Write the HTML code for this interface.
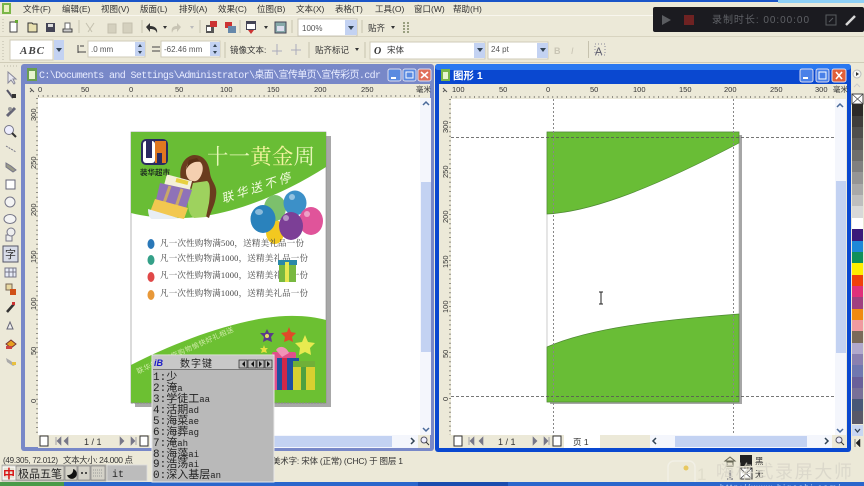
<!DOCTYPE html>
<html><head><meta charset="utf-8"><style>
html,body{margin:0;padding:0;background:#ece9d8;overflow:hidden}
svg{display:block;filter:blur(.35px)}
text{font-family:"Liberation Sans","Noto Sans CJK SC",sans-serif;fill:#333}
.m text{font-size:8.5px;fill:#333}
.r text{font-size:7.5px;fill:#333}
.i text{font-family:"Liberation Mono","Noto Sans CJK SC",monospace;font-size:11px;fill:#222}
.i tspan{font-size:9px}
.p text{font-family:"Liberation Serif","Noto Serif CJK SC",serif;font-size:8.5px;fill:#444}
</style></head><body>
<svg width="864" height="486" viewBox="0 0 864 486" xmlns="http://www.w3.org/2000/svg">
<rect width="864" height="486" fill="#ece9d8"/>
<rect width="864" height="2" fill="#1a55c8"/>
<rect x="778" y="0" width="86" height="3" fill="#8fd0f5"/>
<line x1="0" y1="15.5" x2="864" y2="15.5" stroke="#f8f6ee"/>
<line x1="0" y1="36.5" x2="864" y2="36.5" stroke="#d8d4c0"/>
<line x1="0" y1="62.5" x2="864" y2="62.5" stroke="#d0ccb8"/>
<!-- menu -->
<rect x="2" y="3" width="9" height="11" fill="#7ab648"/><rect x="4" y="5" width="5" height="7" fill="#e8f0c0"/>
<g class="m">
<text x="23" y="12">文件(F)</text><text x="62" y="12">编辑(E)</text><text x="101" y="12">视图(V)</text><text x="140" y="12">版面(L)</text><text x="179" y="12">排列(A)</text><text x="218" y="12">效果(C)</text><text x="257" y="12">位图(B)</text><text x="296" y="12">文本(X)</text><text x="335" y="12">表格(T)</text><text x="375" y="12">工具(O)</text><text x="414" y="12">窗口(W)</text><text x="453" y="12">帮助(H)</text>
</g>
<!-- toolbar 1 -->
<g stroke="#bdb9a8" stroke-dasharray="1 2"><line x1="3" y1="19" x2="3" y2="34"/><line x1="3" y1="41" x2="3" y2="60"/></g>
<rect x="10" y="22" width="7" height="10" fill="#fff" stroke="#444"/><rect x="15" y="20" width="3" height="3" fill="#6a3"/>
<path d="M28 32V23h4l1 1h4v8z" fill="#e8e0b0" stroke="#333"/>
<rect x="46" y="23" width="9" height="9" fill="#445"/><rect x="48" y="24" width="5" height="3" fill="#ddd"/>
<path d="M63 29h9v3h-9z" fill="#ccc" stroke="#444"/><rect x="65" y="23" width="5" height="6" fill="#fff" stroke="#666"/>
<g fill="#d4d0be" stroke="#c4c0ae"><path d="M86 23l6 9M94 23l-6 9" fill="none"/><rect x="108" y="24" width="8" height="9"/><rect x="123" y="23" width="9" height="10"/></g>
<path d="M146 27l4-4v3c5 0 8 3 7 7-1-3-3-4-7-4v3z" fill="#333"/>
<path d="M163 26h4l-2 3z" fill="#333"/>
<path d="M181 27l-4-4v3c-5 0-6 3-5 7 1-3 2-4 5-4v3z" fill="#c8c4b4"/>
<path d="M190 26h4l-2 3z" fill="#bbb"/>
<rect x="206" y="25" width="8" height="8" fill="#555"/><rect x="210" y="21" width="7" height="6" fill="#c33"/><rect x="207" y="27" width="4" height="4" fill="#fff"/>
<rect x="225" y="22" width="7" height="6" fill="#c33"/><rect x="228" y="26" width="8" height="7" fill="#68a"/>
<rect x="246" y="21" width="10" height="9" fill="#445"/><rect x="247" y="24" width="8" height="5" fill="#fff"/><path d="M248 30h6l-3 4z" fill="#c33"/>
<path d="M264 26h4l-2 3z" fill="#333"/>
<rect x="275" y="22" width="11" height="11" fill="#8aa" stroke="#445"/><rect x="277" y="26" width="7" height="5" fill="#dde"/>
<rect x="298" y="19" width="59" height="17" fill="#fff" stroke="#c8c4b4"/><rect x="345" y="20" width="12" height="15" fill="#c3d2f2"/><path d="M348 26l3 4 3-4z" fill="#345"/>
<text x="302" y="31" font-size="8" style="fill:#555">100%</text>
<text x="368" y="31" font-size="8.5">贴齐</text><path d="M391 26h4l-2 3z" fill="#333"/><path d="M404 22v11M408 22v11" stroke="#9aa080" stroke-width="2" stroke-dasharray="2 1"/>
<g stroke="#c6c2ae"><line x1="79" y1="20" x2="79" y2="33"/><line x1="142" y1="20" x2="142" y2="33"/><line x1="200" y1="20" x2="200" y2="33"/><line x1="240" y1="20" x2="240" y2="33"/><line x1="292" y1="20" x2="292" y2="33"/><line x1="362" y1="20" x2="362" y2="33"/></g>
<!-- toolbar 2 -->
<rect x="10" y="40" width="43" height="20" fill="#fff" stroke="#cfcbb8"/>
<text x="20" y="54" font-size="11" font-weight="bold" font-style="italic" style="font-family:'Liberation Serif',serif;fill:#444" textLength="24">ABC</text>
<rect x="54" y="40" width="10" height="20" fill="#c3d2f2"/><path d="M56 48l3 4 3-4z" fill="#345"/>
<path d="M78 45v8M78 52h8M80 46h4" stroke="#444" fill="none"/>
<rect x="88" y="41" width="57" height="16" fill="#fff" stroke="#cfcbb8"/><rect x="135" y="42" width="10" height="14" fill="#c3d2f2"/><path d="M138 47l2-3 2 3zM138 51l2 3 2-3z" fill="#345"/>
<text x="91" y="52" font-size="8" style="fill:#555">.0 mm</text>
<path d="M152 47h8M152 51h8" stroke="#444"/>
<rect x="161" y="41" width="59" height="16" fill="#fff" stroke="#cfcbb8"/><rect x="210" y="42" width="10" height="14" fill="#c3d2f2"/><path d="M213 47l2-3 2 3zM213 51l2 3 2-3z" fill="#345"/>
<text x="164" y="52" font-size="8" style="fill:#555">-62.46 mm</text>
<text x="230" y="53" font-size="8.5">镜像文本:</text>
<path d="M277 44v11M272 51h10M291 50h10M296 44v11" stroke="#aab" fill="none"/>
<text x="315" y="53" font-size="8.5">贴齐标记</text><path d="M355 48h4l-2 3z" fill="#333"/>
<rect x="370" y="42" width="115" height="17" fill="#fff" stroke="#cfcbb8"/><rect x="474" y="43" width="11" height="15" fill="#c3d2f2"/><path d="M477 48l3 4 3-4z" fill="#345"/>
<text x="374" y="54" font-size="10" font-style="italic" font-weight="bold" style="font-family:'Liberation Serif',serif">O</text><text x="387" y="53" font-size="8.5">宋体</text>
<rect x="488" y="42" width="60" height="17" fill="#fff" stroke="#cfcbb8"/><rect x="537" y="43" width="11" height="15" fill="#c3d2f2"/><path d="M540 48l3 4 3-4z" fill="#345"/>
<text x="491" y="52" font-size="8" style="fill:#555">24 pt</text>
<text x="554" y="54" font-size="9" font-weight="bold" style="fill:#c8c4b4">B</text><text x="571" y="54" font-size="9" font-style="italic" style="fill:#c8c4b4">I</text>
<line x1="588.5" y1="41" x2="588.5" y2="58" stroke="#c6c2ae"/>
<text x="595" y="55" font-size="11" style="fill:#556">A</text><rect x="595" y="44" width="10" height="11" fill="none" stroke="#889" stroke-dasharray="1 2"/>
<g stroke="#c6c2ae"><line x1="225" y1="42" x2="225" y2="58"/><line x1="309" y1="42" x2="309" y2="58"/><line x1="365" y1="42" x2="365" y2="58"/></g>
<!-- left tools -->
<g stroke="#bdb9a8" stroke-dasharray="1 2"><line x1="4" y1="66" x2="17" y2="66"/></g>
<path d="M8 72l0 11 3-3 3 4 1-1-2-4h3z" fill="#e8e8f0" stroke="#889"/>
<path d="M7 90l6 8" stroke="#556" stroke-width="2"/><rect x="12" y="94" width="4" height="4" fill="#333"/>
<path d="M7 116l8-8" stroke="#667" stroke-width="3"/><circle cx="10" cy="109" r="2" fill="#999"/>
<circle cx="9" cy="130" r="4.5" fill="#eef" stroke="#778"/><path d="M12 133l4 4" stroke="#333" stroke-width="2"/>
<path d="M6 146l10 6" stroke="#778" stroke-dasharray="2 1"/>
<path d="M6 163l5 3 5 4-3 2-7-5z" fill="#9a9a88" stroke="#778"/>
<rect x="6" y="180" width="9" height="9" fill="#fff" stroke="#667"/>
<circle cx="10" cy="202" r="5" fill="#f4f4f4" stroke="#778"/>
<ellipse cx="10" cy="219" rx="6" ry="4.5" fill="#f4f4f4" stroke="#778"/>
<rect x="6" y="235" width="6" height="6" fill="#eee" stroke="#778"/><circle cx="11" cy="232" r="4" fill="#eee" stroke="#778"/>
<rect x="3" y="246" width="15" height="16" fill="#d8dce8" stroke="#556"/><text x="5" y="258" font-size="11">字</text>
<rect x="5" y="268" width="11" height="9" fill="#e8ecf8" stroke="#778"/><path d="M9 268v9M13 268v9M5 272h11" stroke="#778" fill="none"/>
<rect x="6" y="284" width="6" height="6" fill="#e8d8a0" stroke="#765"/><rect x="10" y="289" width="6" height="6" fill="#d05018"/>
<path d="M7 312l7-8" stroke="#333" stroke-width="2.5"/><rect x="12" y="302" width="3" height="3" fill="#c33"/>
<path d="M7 329l3-7 3 7z" fill="#eee" stroke="#667"/>
<path d="M6 344l5-4 5 4-5 4z" fill="#e8a020" stroke="#733"/><rect x="6" y="346" width="6" height="3" fill="#c44"/>
<path d="M6 358l5 3 4 4-2 1-6-4z" fill="#aaa"/><rect x="12" y="362" width="4" height="3" fill="#e8c040"/>
<!-- left window -->
<rect x="21" y="64" width="413" height="387" rx="3" fill="#7888c8"/>
<rect x="25" y="84" width="405" height="363" fill="#ece9d8"/>
<rect x="38" y="98" width="382" height="337" fill="#fff"/>
<rect x="27" y="68" width="10" height="13" fill="#6a9f50"/><rect x="29" y="71" width="6" height="8" fill="#e8f4d0"/>
<text x="39" y="78" font-size="10" style="font-family:'Liberation Mono','Noto Sans CJK SC',monospace;fill:#e8ecff" textLength="342">C:\Documents and Settings\Administrator\桌面\宣传单页\宣传彩页.cdr</text>
<rect x="388" y="69" width="13" height="12" rx="2" fill="#5a8ae0" stroke="#dde"/><rect x="391" y="77" width="5" height="2" fill="#fff"/>
<rect x="403" y="69" width="13" height="12" rx="2" fill="#5a8ae0" stroke="#dde"/><rect x="406" y="72" width="7" height="6" fill="none" stroke="#fff"/>
<rect x="418" y="69" width="13" height="12" rx="2" fill="#e0705a" stroke="#dde"/><path d="M421 72l7 6M428 72l-7 6" stroke="#fff" stroke-width="1.6"/>
<g class="r"><text x="38" y="92">0</text><text x="81" y="92">50</text><text x="129" y="92">0</text><text x="175" y="92">50</text><text x="220" y="92">100</text><text x="267" y="92">150</text><text x="314" y="92">200</text><text x="361" y="92">250</text><text x="416" y="92" font-size="6">毫米</text>
<text transform="translate(36 121) rotate(-90)">300</text><text transform="translate(36 169) rotate(-90)">250</text><text transform="translate(36 216) rotate(-90)">200</text><text transform="translate(36 263) rotate(-90)">150</text><text transform="translate(36 310) rotate(-90)">100</text><text transform="translate(36 355) rotate(-90)">50</text><text transform="translate(36 403) rotate(-90)">0</text></g>
<line x1="38" y1="96" x2="420" y2="96" stroke="#333" stroke-dasharray="1 3.7"/>
<line x1="37" y1="98" x2="37" y2="435" stroke="#333" stroke-dasharray="1 3.7"/>
<path d="M30 88l4 4M30 92l2-2" stroke="#555"/>
<!-- left scrollbars -->
<rect x="420" y="98" width="11" height="337" fill="#f4f6fc"/>
<rect x="421" y="182" width="10" height="170" fill="#c3d2f2"/>
<path d="M423 105l3-3 3 3M423 428l3 3 3-3" fill="none" stroke="#4a6a9a" stroke-width="1.5"/>
<rect x="38" y="435" width="392" height="13" fill="#ece9d8"/>
<rect x="150" y="435" width="268" height="13" fill="#f4f6fc"/>
<rect x="270" y="436" width="122" height="11" fill="#c3d2f2"/>
<path d="M411 438l3 3-3 3" fill="none" stroke="#345" stroke-width="1.5"/>
<circle cx="424" cy="440" r="3" fill="#eef" stroke="#556"/><path d="M426 442l3 3" stroke="#333"/>
<rect x="40" y="436" width="8" height="10" fill="#fff" stroke="#333"/>
<path d="M56 437v8M61 437l-4 4 4 4zM68 437l-4 4 4 4z" fill="#778" stroke="#778" stroke-width=".6"/>
<text x="84" y="445" font-size="9">1 / 1</text>
<path d="M120 437l4 4-4 4zM131 437l4 4-4 4zM136 437v8" fill="#778" stroke="#778" stroke-width=".6"/>
<rect x="140" y="436" width="8" height="10" fill="#fff" stroke="#333"/>
<!-- poster -->
<rect x="135" y="136" width="196" height="271" fill="#a8a8a8"/>
<rect x="131" y="132" width="195" height="271" fill="#fff" stroke="#888" stroke-width=".6"/>
<path d="M131 132H326V167C290 190 245 210 205 216C180 220 150 218 131 213Z" fill="#69bd35"/>
<path d="M131 365C170 345 220 325 265 318C290 314 312 316 326 320V403H131Z" fill="#6cc032"/>
<line x1="131" y1="403" x2="326" y2="403" stroke="#888" stroke-dasharray="2 1"/>
<!-- logo -->
<rect x="141" y="139" width="27" height="26" rx="5" fill="#2a2a60"/>
<rect x="143" y="141" width="12" height="22" rx="3" fill="#fff"/>
<rect x="146" y="141" width="6" height="17" fill="#2a2a60"/>
<path d="M155 141h11v22h-4v-10h-5v10h-2z" fill="#e07820"/>
<text x="140" y="175" font-size="7.5" font-weight="bold" style="fill:#1c2a20" textLength="30">装华超市</text>
<text x="207" y="164" font-size="21.5" style="font-family:'Liberation Serif','Noto Serif CJK SC',serif;fill:#e6f6b8" textLength="108">十一<tspan style="fill:#f4f4a0">黄金</tspan>周</text>
<text transform="translate(223 203) rotate(-18)" font-size="12" font-style="italic" style="fill:#f4fbe0" textLength="72">联华送不停</text>
<!-- woman -->
<path d="M181 180c-3-14 4-24 13-25 10 0 15 8 16 18 1 9 8 12 6 23-1 9-5 15-7 22l-6-3 1-15z" fill="#6a3c1e"/>
<path d="M186 172c0-8 4-13 10-12 6 1 8 7 6 13-2 6-5 9-9 8-4 0-7-4-7-9z" fill="#f4cfb0"/>
<path d="M186 170c3-6 8-9 14-8l-3-4-8 2z" fill="#5a3015"/>
<path d="M193 183l14-2c4 2 3 14 2 22l-3 14-12 1c-5-3-6-10-6-16z" fill="#9ed25e"/>
<rect x="165" y="177" width="26" height="12" fill="#f4f0d8" transform="rotate(15 176 183)"/>
<path d="M160 183l32 7-6 18-30-8z" fill="#8f72b8"/>
<path d="M170 186l-6 17M182 189l-6 18" stroke="#c9a868" stroke-width="3"/>
<path d="M155 199l33 9-4 11-34-7z" fill="#f2c850"/>
<path d="M148 209l30 9-4 1h-22c-2 0-4-4-4-10z" fill="#e8eef4"/>
<path d="M176 180l12 3" stroke="#e8d040" stroke-width="4"/>
<!-- balloons -->
<ellipse cx="275" cy="232" rx="9" ry="12" fill="#f2c820"/>
<ellipse cx="275" cy="208" rx="11" ry="13" fill="#7cc06c"/>
<ellipse cx="295" cy="203" rx="11.5" ry="12.5" fill="#3c90c8"/>
<ellipse cx="311" cy="221" rx="12" ry="14" fill="#e0549a"/>
<ellipse cx="263" cy="219" rx="12.5" ry="14" fill="#2a82bc"/>
<ellipse cx="291" cy="226" rx="12" ry="14" fill="#7c3f96"/>
<g fill="#fff" opacity=".45"><ellipse cx="259" cy="212" rx="4" ry="3"/><ellipse cx="286" cy="218" rx="3" ry="3"/><ellipse cx="292" cy="197" rx="3" ry="3"/><ellipse cx="307" cy="214" rx="3" ry="3"/></g>
<!-- list -->
<g class="p">
<text x="160" y="246" textLength="144">凡一次性购物满500，送精美礼品一份</text>
<text x="160" y="261" textLength="148">凡一次性购物满1000，送精美礼品一份</text>
<text x="160" y="278" textLength="148">凡一次性购物满1000，送精美礼品一份</text>
<text x="160" y="296" textLength="148">凡一次性购物满1000，送精美礼品一份</text>
</g>
<ellipse cx="151" cy="244" rx="3.5" ry="5" fill="#2a78b8"/>
<ellipse cx="151" cy="260" rx="3.5" ry="5" fill="#34a088"/>
<ellipse cx="151" cy="277" rx="3.5" ry="5" fill="#e04848"/>
<ellipse cx="151" cy="295" rx="3.5" ry="5" fill="#e89838"/>
<rect x="279" y="263" width="17" height="19" fill="#78b840"/><rect x="278" y="260" width="19" height="5" fill="#2a88a8"/><rect x="285" y="262" width="4" height="20" fill="#e8e850"/>
<!-- bottom deco -->
<text transform="translate(138 374) rotate(-24)" font-size="7" style="fill:#cfeaa8" textLength="105">联华超市祝您购物愉快好礼相送</text>
<path d="M267 329l2 4 5 0-3 4 1 5-5-2-4 2 1-5-4-4 5 0z" fill="#5a3a8a"/><circle cx="267" cy="336" r="2" fill="#e8e060"/>
<path d="M289 327l2 5 5 1-4 4 1 5-4-2-5 2 1-5-4-4 6-1z" fill="#e04a28"/>
<path d="M305 335l3 7 7 1-5 5 1 7-6-3-6 3 1-7-5-5 7-1z" fill="#e8ea50"/>
<path d="M264 345l1 3 3 0-2 2 1 3-3-1-3 1 1-3-2-2 3 0z" fill="#e8e040"/>
<rect x="272" y="352" width="24" height="38" rx="2" fill="#e0508c"/>
<rect x="277" y="358" width="22" height="32" fill="#1f4fa0"/>
<rect x="282" y="358" width="5" height="32" fill="#d02848"/>
<path d="M276 350c3-5 10-4 13 3l-7 4z" fill="#f094b8"/>
<rect x="293" y="365" width="22" height="25" fill="#d8d030"/><rect x="301" y="365" width="5" height="25" fill="#50a040"/><rect x="293" y="361" width="22" height="6" fill="#70b038"/>
<!-- right window -->
<rect x="435" y="64" width="416" height="388" rx="3" fill="#0a48d0"/>
<rect x="435" y="64" width="416" height="6" rx="3" fill="#2a78f0"/>
<rect x="439" y="84" width="408" height="364" fill="#ece9d8"/>
<rect x="451" y="99" width="384" height="336" fill="#fff"/>
<rect x="441" y="69" width="9" height="12" fill="#7ab648"/><rect x="443" y="72" width="5" height="7" fill="#e8f4d0"/>
<text x="453" y="79" font-size="10.5" font-weight="bold" style="fill:#fff">图形 1</text>
<rect x="800" y="69" width="13" height="13" rx="2" fill="#4a80e8" stroke="#dde"/><rect x="803" y="77" width="5" height="2" fill="#fff"/>
<rect x="816" y="69" width="13" height="13" rx="2" fill="#4a80e8" stroke="#dde"/><rect x="819" y="72" width="7" height="7" fill="none" stroke="#fff"/>
<rect x="832" y="69" width="14" height="13" rx="2" fill="#e0603a" stroke="#dde"/><path d="M836 72l6 7M842 72l-6 7" stroke="#fff" stroke-width="1.6"/>
<g class="r"><text x="452" y="92">100</text><text x="499" y="92">50</text><text x="546" y="92">0</text><text x="590" y="92">50</text><text x="633" y="92">100</text><text x="679" y="92">150</text><text x="724" y="92">200</text><text x="770" y="92">250</text><text x="815" y="92">300</text><text x="833" y="92" font-size="6">毫米</text>
<text transform="translate(448 133) rotate(-90)">300</text><text transform="translate(448 178) rotate(-90)">250</text><text transform="translate(448 223) rotate(-90)">200</text><text transform="translate(448 268) rotate(-90)">150</text><text transform="translate(448 313) rotate(-90)">100</text><text transform="translate(448 358) rotate(-90)">50</text><text transform="translate(448 401) rotate(-90)">0</text></g>
<line x1="451" y1="97" x2="835" y2="97" stroke="#333" stroke-dasharray="1 3.6"/>
<line x1="450" y1="99" x2="450" y2="435" stroke="#333" stroke-dasharray="1 3.6"/>
<path d="M443 88l4 4M443 92l2-2" stroke="#555"/>
<rect x="550" y="135" width="192" height="269" fill="#a6a6a6"/>
<rect x="547" y="132" width="192" height="270" fill="#fff" stroke="#aaa" stroke-width=".6"/>
<path d="M547 132H739V143C640 195 585 212 547 214Z" fill="#69bd36" stroke="#4f8a34" stroke-width=".7"/>
<path d="M547 347C590 328 660 320 739 314V402H547Z" fill="#69bd36" stroke="#4f8a34" stroke-width=".7"/>
<g stroke="#555" stroke-dasharray="3 2" fill="none" opacity=".8"><line x1="451" y1="137.5" x2="835" y2="137.5"/><line x1="451" y1="396.5" x2="835" y2="396.5"/></g>
<g stroke="#888" stroke-dasharray="2 2" fill="none"><line x1="553.5" y1="99" x2="553.5" y2="435"/><line x1="733.5" y1="99" x2="733.5" y2="435"/></g>
<path d="M599 292h4M599 304h4M601 292v12" stroke="#222" fill="none"/>
<!-- right scrollbars -->
<rect x="835" y="99" width="11" height="336" fill="#f4f6fc"/>
<rect x="836" y="181" width="10" height="172" fill="#c3d2f2"/>
<path d="M837 107l3-3 3 3M837 429l3 3 3-3" fill="none" stroke="#4a6a9a" stroke-width="1.5"/>
<rect x="451" y="435" width="395" height="13" fill="#ece9d8"/>
<rect x="564" y="435" width="36" height="13" fill="#fff"/><text x="573" y="445" font-size="8.5">页 1</text>
<rect x="650" y="435" width="182" height="13" fill="#f4f6fc"/>
<rect x="675" y="436" width="132" height="11" fill="#c3d2f2"/>
<path d="M656 438l-3 3 3 3" fill="none" stroke="#345" stroke-width="1.5"/>
<path d="M825 438l3 3-3 3" fill="none" stroke="#345" stroke-width="1.5"/>
<circle cx="839" cy="440" r="3" fill="#eef" stroke="#556"/><path d="M841 442l3 3" stroke="#333"/>
<rect x="454" y="436" width="8" height="10" fill="#fff" stroke="#333"/>
<path d="M469 437v8M474 437l-4 4 4 4zM483 437l-4 4 4 4z" fill="#778" stroke="#778" stroke-width=".6"/>
<text x="498" y="445" font-size="9">1 / 1</text>
<path d="M533 437l4 4-4 4zM544 437l4 4-4 4zM549 437v8" fill="#778" stroke="#778" stroke-width=".6"/>
<rect x="553" y="436" width="8" height="10" fill="#fff" stroke="#333"/>
<!-- palette -->
<circle cx="857" cy="74" r="4" fill="#f8f8f4" stroke="#bbb"/><path d="M856 72l3 2-3 2z" fill="#333"/>
<path d="M854 87l3-3 3 3" fill="none" stroke="#ccc"/>
<rect x="852" y="94" width="11" height="10" fill="#fff" stroke="#444"/><path d="M852 94l11 10M863 94l-11 10" stroke="#444" stroke-width=".7"/>
<rect x="852" y="104" width="11" height="12" fill="#2c2a28"/><rect x="852" y="116" width="11" height="11" fill="#3f3e3c"/><rect x="852" y="127" width="11" height="11" fill="#4f4f4d"/><rect x="852" y="138" width="11" height="12" fill="#5e5e5c"/><rect x="852" y="150" width="11" height="11" fill="#6e6e6c"/><rect x="852" y="161" width="11" height="11" fill="#808080"/><rect x="852" y="172" width="11" height="12" fill="#959595"/><rect x="852" y="184" width="11" height="11" fill="#a9a9a9"/><rect x="852" y="195" width="11" height="11" fill="#bebebe"/><rect x="852" y="206" width="11" height="12" fill="#d8d8d8"/><rect x="852" y="218" width="11" height="11" fill="#ffffff"/><rect x="852" y="229" width="11" height="12" fill="#3a1a7a"/><rect x="852" y="241" width="11" height="11" fill="#1e88d8"/><rect x="852" y="252" width="11" height="11" fill="#10905a"/><rect x="852" y="263" width="11" height="12" fill="#ffee00"/><rect x="852" y="275" width="11" height="11" fill="#f0400a"/><rect x="852" y="286" width="11" height="11" fill="#e0307a"/><rect x="852" y="297" width="11" height="12" fill="#a04080"/><rect x="852" y="309" width="11" height="11" fill="#f08a10"/><rect x="852" y="320" width="11" height="11" fill="#f09aa0"/><rect x="852" y="331" width="11" height="12" fill="#7a6a5a"/><rect x="852" y="343" width="11" height="11" fill="#b0a8cc"/><rect x="852" y="354" width="11" height="11" fill="#8a80b0"/><rect x="852" y="365" width="11" height="12" fill="#7078b0"/><rect x="852" y="377" width="11" height="11" fill="#6a609a"/><rect x="852" y="388" width="11" height="11" fill="#787098"/><rect x="852" y="399" width="11" height="12" fill="#485878"/><rect x="852" y="411" width="11" height="13" fill="#585868"/>
<rect x="852" y="425" width="11" height="11" fill="#c8d6f2"/><path d="M855 429l2.5 3 2.5-3" fill="none" stroke="#345" stroke-width="1.3"/>
<path d="M855 439v8M860 439l-4 4 4 4z" fill="#222" stroke="#222" stroke-width=".5"/>
<!-- status -->
<text x="3" y="463" font-size="8" textLength="55">(49.305, 72.012)</text>
<text x="63" y="463" font-size="8.5" textLength="70">文本大小: 24.000 点</text>
<text x="272" y="464" font-size="8.5" textLength="131">美术字: 宋体 (正常) (CHC) 于 图层 1</text>
<path d="M725 461l5-4 5 4zM727 462h6v4h-6z" fill="#e8e4d0" stroke="#665"/>
<rect x="740" y="455" width="12" height="11" fill="#222"/>
<text x="755" y="464" font-size="8.5">黑</text>
<rect x="740" y="468" width="12" height="11" fill="#fff" stroke="#333"/><path d="M740 468l12 11M752 468l-12 11" stroke="#333" stroke-width=".7"/>
<path d="M730 470v8M727 479h6" stroke="#556" fill="none"/>
<text x="755" y="477" font-size="8.5">无</text>
<!-- watermark -->
<rect x="668" y="461" width="27" height="28" rx="6" fill="none" stroke="#f2f0e6" stroke-width="1.5"/>
<circle cx="686" cy="468" r="2.5" fill="#e8c860"/>
<text x="697" y="480" font-size="17" style="fill:#e0ddcc">1</text>
<text x="716" y="478" font-size="18" opacity=".8" style="fill:#d8d5c8" textLength="136">嗨格式录屏大师</text>
<!-- taskbar -->
<rect x="0" y="482" width="864" height="4" fill="#2a66cc"/>
<rect x="0" y="482" width="64" height="4" fill="#4a9a48"/>
<rect x="418" y="482" width="90" height="4" fill="#1a4cae"/>
<text x="720" y="490" font-size="8" style="fill:#bcd8f8" textLength="120">http://www.bigeshi.com/</text>
<!-- IME bar -->
<rect x="2" y="465" width="104" height="16" fill="#cfcdc4" stroke="#888" stroke-width=".5"/>
<rect x="3" y="467" width="12" height="12" fill="#e8e4d8" stroke="#fff"/>
<text x="3" y="478" font-size="12" font-weight="bold" style="fill:#d81818">中</text>
<rect x="16" y="466" width="48" height="14" fill="#d4d2c8" stroke="#777" stroke-width=".6"/>
<text x="18" y="477.5" font-size="11" style="fill:#222" textLength="44">极品五笔</text>
<rect x="65" y="466" width="12" height="14" fill="#d4d2c8" stroke="#777" stroke-width=".6"/>
<path d="M73 469a5 5 0 1 1-6 6 5 5 0 0 0 6-6z" fill="#111"/>
<rect x="78" y="466" width="12" height="14" fill="#d4d2c8" stroke="#777" stroke-width=".6"/>
<circle cx="82" cy="473" r="1" fill="#222"/><circle cx="86" cy="473" r="1" fill="#222"/>
<rect x="91" y="466" width="14" height="14" fill="#d4d2c8" stroke="#777" stroke-width=".6"/>
<path d="M93 470h10M93 473h10M93 476h10" stroke="#999" stroke-dasharray="1 1"/>
<rect x="107" y="465" width="40" height="16" fill="#bcbcbc" stroke="#ddd" stroke-width=".8"/>
<text x="112" y="477" font-size="10" style="font-family:'Liberation Mono',monospace;fill:#222">it</text>
<!-- IME candidates -->
<rect x="152" y="355" width="122" height="127" fill="#b9b9b9" stroke="#e8e8e8"/>
<rect x="153" y="356" width="120" height="13" fill="#c8c8c8"/>
<line x1="153" y1="369.5" x2="273" y2="369.5" stroke="#777"/>
<text x="154" y="366" font-size="9" font-weight="bold" font-style="italic" style="fill:#1a1ac8">iB</text>
<text x="180" y="367" font-size="10" style="fill:#222" textLength="32">数字键</text>
<g fill="#bbb" stroke="#222" stroke-width=".7"><rect x="239" y="360" width="8" height="8"/><rect x="248" y="360" width="8" height="8"/><rect x="257" y="360" width="7" height="8"/><rect x="265" y="360" width="7" height="8"/></g>
<g fill="#111"><path d="M245 361v6l-3-3zM254 361v6l-3-3zM259 361v6l3-3zM267 361v6l3-3z"/></g>
<g class="i">
<text x="153" y="380">1:少</text>
<text x="153" y="391">2:淹<tspan>a</tspan></text>
<text x="153" y="402">3:学徒工<tspan>aa</tspan></text>
<text x="153" y="413">4:活期<tspan>ad</tspan></text>
<text x="153" y="424">5:海菜<tspan>ae</tspan></text>
<text x="153" y="435">6:海葬<tspan>ag</tspan></text>
<text x="153" y="446">7:淹<tspan>ah</tspan></text>
<text x="153" y="457">8:海藻<tspan>ai</tspan></text>
<text x="153" y="467">9:浩荡<tspan>ai</tspan></text>
<text x="153" y="478">0:深入基层<tspan>an</tspan></text>
</g>
<!-- recorder -->
<rect x="653" y="7" width="211" height="25" rx="2" fill="#1b1b20"/>
<path d="M662 15l9 5-9 5z" fill="#5a5c60"/>
<rect x="684" y="15" width="10" height="10" fill="#6e2222"/>
<text x="712" y="23" font-size="10" style="fill:#5f6166" textLength="97">录制时长: 00:00:00</text>
<rect x="826" y="15" width="10" height="10" fill="none" stroke="#5a5c60"/><path d="M829 22l4-4" stroke="#5a5c60"/>
<path d="M846 25l9-9" stroke="#d8d8d8" stroke-width="2.5"/>
</svg>
</body></html>
